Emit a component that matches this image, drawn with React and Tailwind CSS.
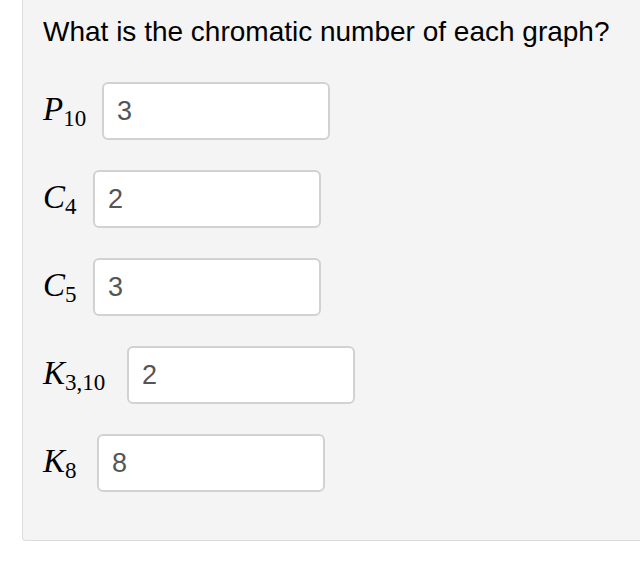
import React from 'react';

const rows = [
  { base: 'P', sub: '10', value: '3', labelW: 'w-[59px]', subMl: 'ml-[0px]' },
  { base: 'C', sub: '4', value: '2', labelW: 'w-[50px]', subMl: 'ml-[0px]' },
  { base: 'C', sub: '5', value: '3', labelW: 'w-[50px]', subMl: 'ml-[0px]' },
  { base: 'K', sub: '3,10', value: '2', labelW: 'w-[84px]', subMl: 'ml-[0px]' },
  { base: 'K', sub: '8', value: '8', labelW: 'w-[54px]', subMl: 'ml-[0px]' },
];

function MathLabel({ base, sub, className, subMl }) {
  return (
    <span className={`${className} shrink-0 whitespace-nowrap text-black font-['Liberation_Serif',serif]`}>
      <span className="italic text-[33px] leading-none">{base}</span>
      <span className={`${subMl} text-[23px] leading-none align-[-6px]`}>{sub}</span>
    </span>
  );
}

export default function App() {
  return (
    <div className="w-[640px] h-[564px] bg-white overflow-hidden">
      <div className="ml-[22px] w-[640px] h-[541px] bg-[#f4f4f4] border-l border-b border-[#dcdcdc] rounded-bl-[4px] pl-[20px] pt-[16px]">
        <h1 className="text-[28px] leading-[32px] text-black font-['Liberation_Sans',Arial,sans-serif]">
          What is the chromatic number of each graph?
        </h1>
        <div className="mt-[34px] flex flex-col gap-[30px]">
          {rows.map((r, i) => (
            <div key={i} className="flex items-center h-[58px]">
              <MathLabel base={r.base} sub={r.sub} subMl={r.subMl} className={r.labelW} />
              <input
                type="text"
                defaultValue={r.value}
                className="w-[228px] h-[58px] bg-white border-2 border-[#d2d2d2] rounded-[6px] pl-[13px] text-[27px] text-[#555555] outline-none font-['Liberation_Sans',Arial,sans-serif]"
              />
            </div>
          ))}
        </div>
      </div>
    </div>
  );
}
